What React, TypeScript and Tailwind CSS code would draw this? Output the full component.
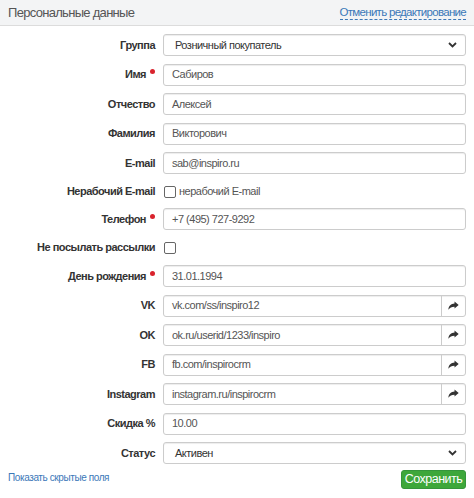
import React from "react";

const font = { fontFamily: '"Liberation Sans", Arial, sans-serif' };

function Required() {
  return <span className="ml-[4px] mb-[6px] inline-block w-[5px] h-[5px] rounded-full bg-[#d9232d]" />;
}

function Label({ text, required }: { text: string; required?: boolean }) {
  return (
    <div className="w-[155px] shrink-0 flex items-center justify-end text-[11px] tracking-[-0.5px] font-bold text-[#333]">
      <span>{text}</span>
      {required && <Required />}
    </div>
  );
}

function ShareIcon() {
  return (
    <svg width="11" height="10" viewBox="0 0 16 14" fill="#333">
      <path d="M15.5 5.5 L9.5 0.5 V3.4 C4.5 3.6 1 6.5 0.5 12.5 C2.5 9.3 5.3 8 9.5 8 V10.8 Z" />
    </svg>
  );
}

function ChevronDown() {
  return (
    <svg width="9" height="6" viewBox="0 0 9 6" fill="none" stroke="#333" strokeWidth="1.8">
      <path d="M1 1 L4.5 4.5 L8 1" />
    </svg>
  );
}

const boxCls =
  "h-[22px] flex-1 flex items-center rounded-[3px] border border-[#ccc] bg-white shadow-[inset_0_1px_1px_rgba(0,0,0,0.075)] text-[11px] tracking-[-0.5px] text-[#555]";

function InputRow({ label, value, required, link }: { label: string; value: string; required?: boolean; link?: boolean }) {
  return (
    <div className="flex items-center">
      <Label text={label} required={required} />
      <div className={`${boxCls} ml-[8px]`}>
        <span className="flex-1 pl-[8px] whitespace-nowrap">{value}</span>
        {link && (
          <span className="w-[24px] h-full flex items-center justify-center border-l border-[#ccc]">
            <ShareIcon />
          </span>
        )}
      </div>
    </div>
  );
}

function SelectRow({ label, value }: { label: string; value: string }) {
  return (
    <div className="flex items-center">
      <Label text={label} />
      <div className={`${boxCls} ml-[8px] pr-[8px]`}>
        <span className="flex-1 pl-[11px] text-[#333]">{value}</span>
        <ChevronDown />
      </div>
    </div>
  );
}

function Checkbox() {
  return <span className="inline-block w-[12px] h-[12px] rounded-[2px] border border-[#666] bg-white" />;
}

export default function App() {
  return (
    <div className="w-[474px] h-[498px] bg-white overflow-hidden" style={font}>
      <div className="h-[26px] flex items-center justify-between px-[8px] bg-[#f3f4f5] border-b border-[#dcdcdc]">
        <span className="text-[13px] tracking-[-0.7px] text-[#555]">Персональные данные</span>
        <span className="text-[11.5px] tracking-[-0.7px] text-[#3b78b8] border-b border-dashed border-[#3b78b8] leading-[14px]">
          Отменить редактирование
        </span>
      </div>

      <div className="pt-[8px] pr-[8px] flex flex-col gap-y-[7.5px]">
        <SelectRow label="Группа" value="Розничный покупатель" />
        <InputRow label="Имя" value="Сабиров" required />
        <InputRow label="Отчество" value="Алексей" />
        <InputRow label="Фамилия" value="Викторович" />
        <InputRow label="E-mail" value="sab@inspiro.ru" />
        <div className="flex items-center h-[18px] mt-[1px]">
          <Label text="Нерабочий E-mail" />
          <div className="ml-[9px] flex items-center text-[11px] tracking-[-0.5px] text-[#555]">
            <Checkbox />
            <span className="ml-[3px]">нерабочий E-mail</span>
          </div>
        </div>
        <InputRow label="Телефон" value="+7 (495) 727-9292" required />
        <div className="flex items-center h-[20px]">
          <Label text="Не посылать рассылки" />
          <div className="ml-[9px] flex items-center">
            <Checkbox />
          </div>
        </div>
        <InputRow label="День рождения" value="31.01.1994" required />
        <InputRow label="VK" value="vk.com/ss/inspiro12" link />
        <InputRow label="OK" value="ok.ru/userid/1233/inspiro" link />
        <InputRow label="FB" value="fb.com/inspirocrm" link />
        <InputRow label="Instagram" value="instagram.ru/inspirocrm" link />
        <InputRow label="Скидка %" value="10.00" />
        <SelectRow label="Статус" value="Активен" />
      </div>

      <div className="flex items-center justify-between pl-[8px] pr-[8px] mt-[6px]">
        <span className="text-[10px] tracking-[-0.4px] text-[#3b78b8] mb-[4px]">Показать скрытые поля</span>
        <button className="h-[19px] w-[65px] rounded-[3px] bg-[#3ea73a] border border-[#35953a] text-white text-[12.5px] tracking-[-0.5px] leading-none">
          Сохранить
        </button>
      </div>
    </div>
  );
}
